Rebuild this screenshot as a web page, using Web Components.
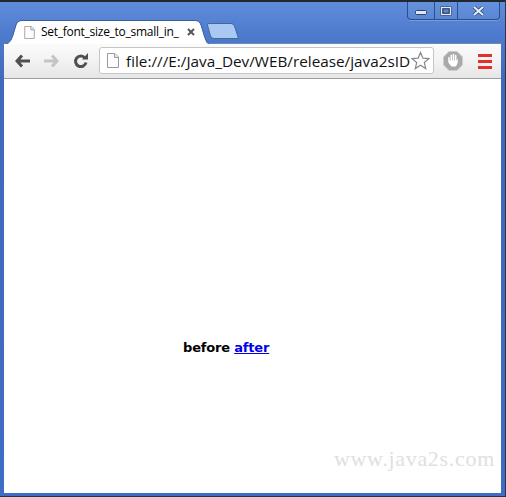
<!DOCTYPE html>
<html><head><meta charset="utf-8"><style>
html,body{margin:0;padding:0;background:#fff}
browser-window{width:506px;height:497px}
</style></head><body>
<browser-window>
  <browser-tabstrip slot="strip">
    <browser-tab>Set_font_size_to_small_in_</browser-tab>
  </browser-tabstrip>
  <browser-toolbar slot="toolbar" url="file:///E:/Java_Dev/WEB/release/java2sID"></browser-toolbar>
  <page-content><b>before</b> <a href="#">after</a></page-content>
</browser-window>
<script>
const def=(name,html,init)=>customElements.define(name,class extends HTMLElement{
  constructor(){super();this.attachShadow({mode:'open'}).innerHTML=html;}
  connectedCallback(){init&&init(this);}
});
const pageIcon=(w,h)=>`<svg width="${w}" height="${h}" viewBox="0 0 12 15"><path d="M.5.5H8L11.5 4V14.5H.5Z" fill="#fdfdfd" stroke="#9a9a9a"/><path d="M7.5.5V4.5H11.5" fill="#e8e8e8" stroke="#9a9a9a"/></svg>`;

def('browser-window',`<style>
:host{display:grid;grid-template-rows:auto auto 1fr;box-sizing:border-box;padding:1px 4px 3px 4px;
 border-top:2px solid #23272e;border-right:1px solid #2a3448;border-bottom:1px solid #27324a;
 background:linear-gradient(#5f8ddb 0,#4f7cce 30px,#3f69ba 80px,#3f6cc4 100%)}
</style><slot name="strip"></slot><slot name="toolbar"></slot><slot></slot>`);

def('browser-tabstrip',`<style>
:host{display:flex;align-items:flex-start;height:40px;margin:0 -4px 0 0;position:relative;box-sizing:border-box}
.tabs{display:flex;align-items:flex-end;height:40px;flex:1;min-width:0}
.new{margin:0 0 4px -2px;display:block}
win-controls{margin:-1px 5px 0 0}
</style><div class="tabs"><slot></slot><svg class="new" width="33" height="16" viewBox="0 0 33 16"><path d="M1.5.5H24Q26.5.5 27.5 3L31.5 15.5H7Q4.5 15.5 3.5 13L.7 3Q.2.5 1.5.5Z" fill="#a9c8f2" stroke="#44679f"/></svg></div><win-controls></win-controls>`);

def('browser-tab',`<style>
:host{display:flex;align-items:center;position:relative;box-sizing:border-box;width:205px;height:24px;padding:0 0 0 20px;
 font:12px/16px "Open Sans","Noto Sans",sans-serif;color:#000;z-index:1;margin-bottom:-1px}
svg.bg{position:absolute;inset:0;z-index:-1}
.ic{display:block;margin-right:6px;height:13px}
.t{width:138px;white-space:nowrap;letter-spacing:-.27px;margin-top:-1px}
.x{display:block;margin-left:8px}
</style><svg class="bg" width="205" height="24" viewBox="0 0 205 24"><path d="M0 24.5C5 24 7 21 9 15L12 5C13 2 15 .5 18 .5H191C194 .5 196 2 197 5L200 15C202 21 203 24 206 24.5Z" fill="#fff" stroke="#3a5c98"/></svg>
<span class="ic">${pageIcon(11,13)}</span><span class="t"><slot></slot></span>
<svg class="x" width="8" height="8" viewBox="0 0 8 8"><path d="M1 1L7 7M7 1L1 7" stroke="#555" stroke-width="2"/></svg>`);

def('win-controls',`<style>
:host{display:flex;height:18px;box-sizing:border-box;border:1px solid #2c4f8c;border-top:0;border-radius:0 0 4px 4px;background:linear-gradient(#6592dc,#5a86d4);box-shadow:0 1px 0 rgba(255,255,255,.2)}
span{display:flex;align-items:center;justify-content:center;box-sizing:border-box;height:100%}
span+span{border-left:1px solid #2c4f8c}
.a{width:26px}.b{width:23px}.c{width:42px}
</style><span class="a"><svg width="12" height="6" viewBox="0 0 12 6" style="margin-top:5px"><rect x=".5" y=".5" width="11" height="4" rx="1" fill="#dfe8f7" stroke="#2b446e"/></svg></span>
<span class="b"><svg width="12" height="10" viewBox="0 0 12 10"><rect x=".5" y=".5" width="11" height="9" rx="1" fill="#2b446e" stroke="#2b446e"/><rect x="1.5" y="1.5" width="9" height="7" fill="none" stroke="#dfe8f7" stroke-width="1.4"/><rect x="3" y="3" width="6" height="4" fill="#5a86d4" stroke="#2b446e" stroke-width=".8"/></svg></span>
<span class="c"><svg width="13" height="10" viewBox="0 0 13 10"><path d="M2 1L11 9M11 1L2 9" stroke="#2b446e" stroke-width="3.4"/><path d="M2 1L11 9M11 1L2 9" stroke="#e8effa" stroke-width="2"/></svg></span>`);

def('browser-toolbar',`<style>
:host{display:flex;align-items:center;box-sizing:border-box;height:36px;position:relative;padding:0 0 0 11px;
 background:linear-gradient(#fbfbfb 0,#f2f2f2 50%,#e6e6e6 100%);border-bottom:1px solid #9c9ea2;border-top:1px solid #6c89ba;
 font:15.3px/20px "Open Sans","Noto Sans",sans-serif}
svg{display:block;flex:none}
.nav{margin-right:14px}
.nav.r{margin-right:11px}
.box{display:flex;align-items:center;box-sizing:border-box;width:335px;height:27px;background:#fff;border:1px solid #c6c6c6;border-radius:3px;padding:0 3px 0 7px;margin-top:-1px}
.url{width:282px;margin-left:7px;white-space:nowrap;color:#111}
.star{margin-left:3px}
.hand{margin-left:9px}
.menu{margin-left:15px}
</style>
<svg class="nav" width="15" height="14" viewBox="0 0 15 14"><path d="M7 1.5L2 7L7 12.5M2.5 7H15" fill="none" stroke="#505050" stroke-width="3"/></svg>
<svg class="nav" width="15" height="14" viewBox="0 0 15 14"><path d="M8 1.5L13 7L8 12.5M12.5 7H0" fill="none" stroke="#c4c4c4" stroke-width="3"/></svg>
<svg class="nav r" width="15" height="16" viewBox="0 0 15 16"><path d="M12 5A5.3 5.3 0 1 0 13 9.5" fill="none" stroke="#505050" stroke-width="3"/><path d="M9 6.5H15V0Z" fill="#505050"/></svg>
<div class="box">${pageIcon(12,15)}<span class="url" id="u"></span>
<svg class="star" width="19" height="19" viewBox="0 0 20 20"><path d="M10 1.5L12.5 7.5L18.8 8L14 12.2L15.5 18.5L10 15.1L4.5 18.5L6 12.2L1.2 8L7.5 7.5Z" fill="#fff" stroke="#8a8a8a" stroke-width="1.3"/></svg></div>
<svg class="hand" width="20" height="20" viewBox="0 0 20 20"><path d="M6 .5H14L19.5 6V14L14 19.5H6L.5 14V6Z" fill="#a9a9a9" stroke="#cdcdcd"/><path d="M6 10V6.5M8.3 10V4.2M10.5 10V3.6M12.7 10V4.6" fill="none" stroke="#fff" stroke-width="1.5" stroke-linecap="round"/><path d="M5.3 9.5H13.5L14.8 7.5V11.5L13 15.5H8.5L5.3 11.5Z" fill="#fff"/></svg>
<svg class="menu" width="14" height="15" viewBox="0 0 14 15"><path d="M0 0h14v3H0zM0 6h14v3H0zM0 12h14v3H0z" fill="#e0312c"/></svg>`,
el=>{el.shadowRoot.getElementById('u').textContent=el.getAttribute('url');});

def('page-content',`<style>
:host{display:flex;flex-direction:column;background:#fff;min-height:0;box-sizing:border-box;padding:261px 0 0 179px;
 font:bold 13px/16px "DejaVu Sans",Verdana,sans-serif;color:#000;letter-spacing:-.18px}
::slotted(a){color:#00e}
.w{margin:90px 6px 0 auto;font:normal 22px/26px "Liberation Serif",serif;color:#e0e0e0;letter-spacing:.7px;white-space:nowrap}
</style><div><slot></slot></div><div class="w">www.java2s.com</div>`);
</script>
</body></html>
